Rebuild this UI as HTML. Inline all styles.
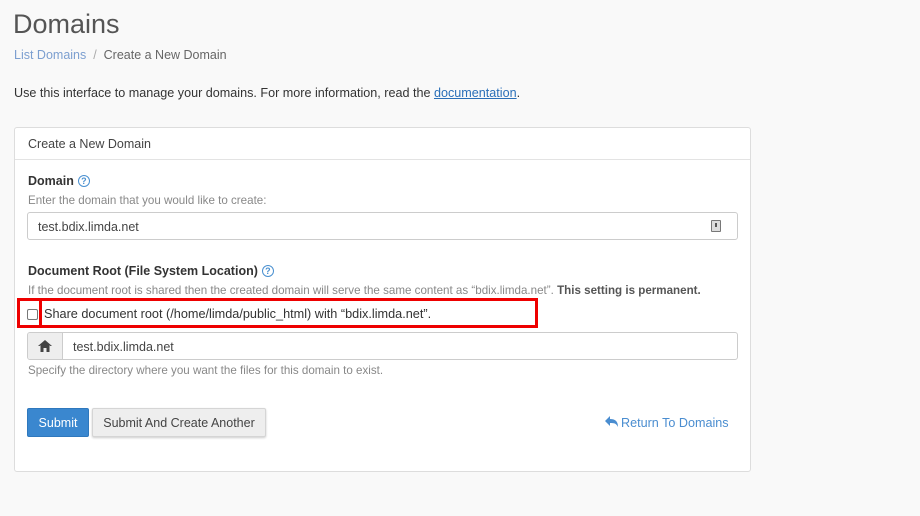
<!DOCTYPE html>
<html><head><style>
*{box-sizing:border-box;margin:0;padding:0}
body{width:920px;height:516px;background:#f9f9f9;font-family:"Liberation Sans",sans-serif;color:#333;position:relative;overflow:hidden}
.a{position:absolute;white-space:nowrap}
.q{display:inline-block;width:12px;height:12px;border:1.3px solid #4a90d0;border-radius:50%;color:#4a90d0;font-size:9px;text-align:center;line-height:10px;font-weight:bold;vertical-align:1px;margin-left:4px}
</style></head><body>
<div class="a" style="left:13px;top:9px;font-size:27px;color:#555">Domains</div>
<div class="a" style="left:14px;top:48px;font-size:12.5px;color:#666"><span style="color:#7c9fd0">List Domains</span> <span style="color:#aaa">&nbsp;/&nbsp;</span> Create a New Domain</div>
<div class="a" style="left:14px;top:86px;font-size:12.6px;color:#333">Use this interface to manage your domains. For more information, read the <span style="color:#2a6fb8;text-decoration:underline">documentation</span>.</div>
<div class="a" style="left:14px;top:127px;width:737px;height:345px;background:#fff;border:1px solid #ddd;border-radius:3px"></div>
<div class="a" style="left:15px;top:159px;width:735px;height:1px;background:#e3e3e3"></div>
<div class="a" style="left:28px;top:137px;font-size:12.5px;color:#444">Create a New Domain</div>
<div class="a" style="left:28px;top:174px;font-size:12.5px;font-weight:bold;color:#333">Domain<span class="q">?</span></div>
<div class="a" style="left:28px;top:194px;font-size:11.6px;color:#888">Enter the domain that you would like to create:</div>
<div class="a" style="left:27px;top:212px;width:711px;height:28px;border:1px solid #ccc;border-radius:3px;background:#fff"></div>
<div class="a" style="left:38px;top:220px;font-size:12.5px;color:#444">test.bdix.limda.net</div>
<div class="a" style="left:711px;top:220px;width:10px;height:12px;border:1px solid #777;border-radius:1px;background:#ddd"><div style="margin:2px auto;width:2px;height:4px;background:#555"></div></div>
<div class="a" style="left:28px;top:264px;font-size:12.5px;font-weight:bold;color:#333">Document Root (File System Location)<span class="q">?</span></div>
<div class="a" style="left:28px;top:284px;font-size:11.6px;color:#888">If the document root is shared then the created domain will serve the same content as “bdix.limda.net”. <b style="color:#555">This setting is permanent.</b></div>
<div class="a" style="left:17px;top:298px;width:521px;height:30px;border:3px solid #ee0000;background:#fff"></div>
<div class="a" style="left:17px;top:298px;width:25px;height:30px;border:3px solid #ee0000"></div>
<div class="a" style="left:27px;top:309px;width:11px;height:11px;border:1px solid #777;border-radius:2px;background:#fff"></div>
<div class="a" style="left:44px;top:307px;font-size:12.7px;color:#333">Share document root (/home/limda/public_html) with “bdix.limda.net”.</div>
<div class="a" style="left:27px;top:332px;width:711px;height:28px;border:1px solid #ccc;border-radius:3px;background:#fff;overflow:hidden"><div style="width:35px;height:100%;background:#eee;border-right:1px solid #ccc"></div></div>
<svg class="a" style="left:38px;top:340px" width="14" height="12" viewBox="0 0 14 12"><path d="M7 0 L0 6 L1.5 6 L2.5 5.3 V12 H5.5 V8 H8.5 V12 H11.5 V5.3 L12.5 6 L14 6 Z" fill="#444"/></svg>
<div class="a" style="left:73px;top:340px;font-size:12.5px;color:#444">test.bdix.limda.net</div>
<div class="a" style="left:28px;top:364px;font-size:11.6px;color:#888">Specify the directory where you want the files for this domain to exist.</div>
<div class="a" style="left:27px;top:408px;width:62px;height:29px;background:#3a87cf;border:1px solid #2f78bd;border-radius:2px;color:#fff;font-size:12.5px;text-align:center;line-height:28px">Submit</div>
<div class="a" style="left:92px;top:408px;width:174px;height:29px;background:#eee;border:1px solid #d5d5d5;border-radius:2px;color:#444;font-size:12.5px;text-align:center;line-height:28px;box-shadow:0 1px 2px rgba(0,0,0,.2)">Submit And Create Another</div>
<svg class="a" style="left:605px;top:416px" width="14" height="12" viewBox="0 0 14 12"><path d="M0 5 L5 0 V3 C10 3 13 5 13 11 C11 7 9 7 5 7 V10 Z" fill="#4a8dd0"/></svg>
<div class="a" style="left:621px;top:416px;font-size:12.6px;color:#4a8dd0">Return To Domains</div>
</body></html>
